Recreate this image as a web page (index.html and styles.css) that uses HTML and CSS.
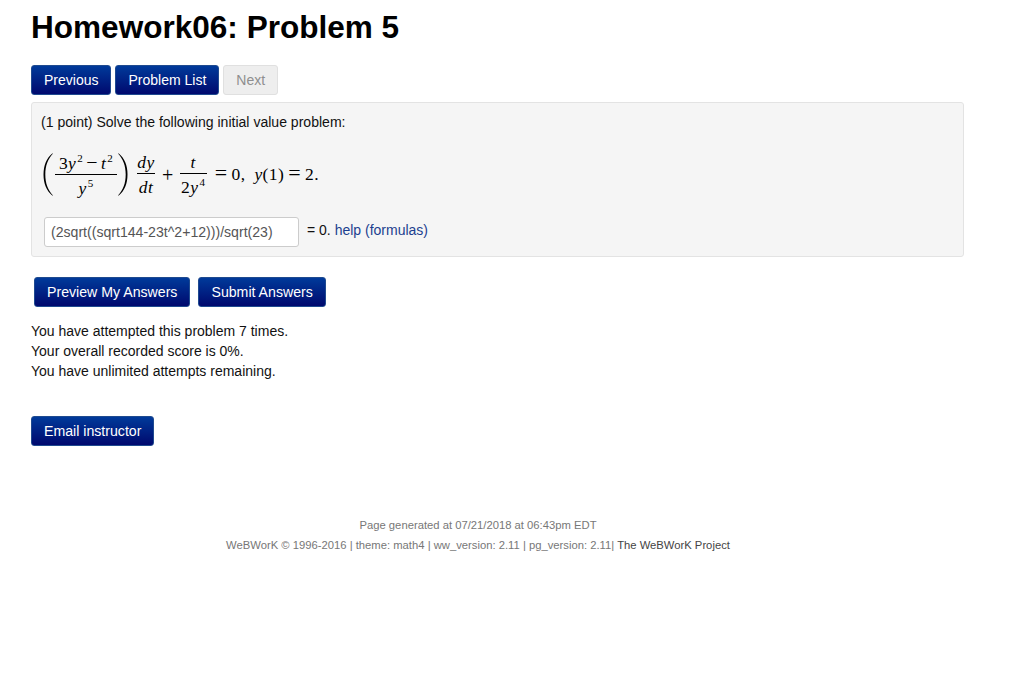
FILE: index.html
```html
<!DOCTYPE html>
<html lang="en">
<head>
<meta charset="utf-8">
<title>Homework06: Problem 5</title>
<link rel="stylesheet" href="styles.css">
</head>
<body>
<main class="page">
  <h1 class="title">Homework06: Problem 5</h1>
  <nav class="nav">
    <a class="btn">Previous</a>
    <a class="btn">Problem List</a>
    <a class="btn btn-off">Next</a>
  </nav>
  <section class="well">
    <p class="intro">(1 point) Solve the following initial value problem:</p>
    <div class="math">
      <svg class="paren" width="10" height="43" viewBox="0 0 10 43"><path d="M9.5 0.3C3.5 5 0.5 12.5 0.5 21.5S3.5 38 9.5 42.7L9.8 42.2C5 37 2.3 30.5 2.3 21.5S5 6 9.8 0.8Z"/></svg>
      <span class="frac f-main"><span class="num">3<i>y</i><sup>2</sup><span class="op">−</span><i>t</i><sup>2</sup></span><span class="den"><i>y</i><sup>5</sup></span></span>
      <svg class="paren" width="10" height="43" viewBox="0 0 10 43"><path d="M0.5 0.3C6.5 5 9.5 12.5 9.5 21.5S6.5 38 0.5 42.7L0.2 42.2C5 37 7.7 30.5 7.7 21.5S5 6 0.2 0.8Z"/></svg>
      <span class="frac f-dy"><span class="num"><i>dy</i></span><span class="den"><i>dt</i></span></span>
      <span class="plus">+</span>
      <span class="frac f-t"><span class="num"><i>t</i></span><span class="den">2<i>y</i><sup>4</sup></span></span>
      <span class="rest"><span class="eq">=</span>0,<span class="gap"></span><i>y</i>(1)<span class="eq">=</span>2.</span>
    </div>
    <div class="answer">
      <input class="field" type="text" value="(2sqrt((sqrt144-23t^2+12)))/sqrt(23)">
      <span class="after">= 0. <a class="link">help (formulas)</a></span>
    </div>
  </section>
  <div class="actions">
    <a class="btn btn-wide">Preview My Answers</a>
    <a class="btn btn-wide">Submit Answers</a>
  </div>
  <div class="score">
    <p>You have attempted this problem 7 times.</p>
    <p>Your overall recorded score is 0%.</p>
    <p>You have unlimited attempts remaining.</p>
  </div>
  <div class="email"><a class="btn btn-wide">Email instructor</a></div>
  <footer class="foot">
    <p>Page generated at 07/21/2018 at 06:43pm EDT</p>
    <p>WeBWorK © 1996-2016 | theme: math4 | ww_version: 2.11 | pg_version: 2.11| <span class="foot-link">The WeBWorK Project</span></p>
  </footer>
</main>
</body>
</html>
```
FILE: styles.css
```css
* { box-sizing: border-box; }
html, body { margin: 0; padding: 0; background: #fff; }
body { font-family: "Liberation Sans", Arial, sans-serif; font-size: 14px; line-height: 20px; color: #111; }
.page { width: 933px; margin-left: 31px; height: 683px; overflow: hidden; }
.title { margin: 0; padding-top: 7px; height: 65px; font-size: 31.55px; line-height: 40px; font-weight: 700; color: #000; }
.nav { display: flex; gap: 4px; height: 30px; }
.btn {
  display: inline-block; height: 30px; padding: 4px 12px; border: 1px solid #1f4a8f; border-radius: 3px;
  background: linear-gradient(to bottom, #003a9a, #00096e); color: #fff; font-size: 14px; line-height: 20px;
  white-space: nowrap;
}
.btn-wide { font-size: 14.15px; }
.btn-off { background: #eee; border-color: #e0e0e0; color: #8f8f8f; }
.well {
  margin-top: 7px; height: 155px; padding: 9px; background: #f5f5f5; border: 1px solid #e3e3e3; border-radius: 3px;
}
.intro { margin: 0; font-size: 14.05px; }
.math {
  display: flex; align-items: center; height: 47px; margin-top: 19px; margin-left: 2px;
  font-family: "Liberation Serif", "Times New Roman", serif; font-size: 17.5px; line-height: 20px; color: #000;
  letter-spacing: 0.4px;
}
.math i { font-style: italic; }
.math sup { font-size: 11px; line-height: 0; position: relative; top: -7px; vertical-align: baseline; margin-left: 1px; }
.paren { fill: #000; flex: none; }
.frac { display: flex; flex-direction: column; align-items: center; flex: none; }
.num { padding-bottom: 1px; border-bottom: 1px solid #000; align-self: stretch; text-align: center; white-space: nowrap; }
.den { padding-top: 3px; white-space: nowrap; }
.op { margin: 0 3px; font-size: 20px; }
.f-main { width: 62px; margin: 0 1px 0 2px; }
.f-dy { width: 18px; margin-left: 9px; }
.plus { margin: 0 6px 0 7px; font-size: 20px; }
.f-t { width: 27px; }
.rest { margin: -2px 0 0 8px; white-space: nowrap; }
.eq { font-size: 22px; }
.eq:first-child { margin-right: 4px; }
.eq:not(:first-child) { margin: 0 4px; }
.gap { display: inline-block; width: 9px; }
.answer { display: flex; align-items: center; margin-top: 19px; margin-left: 3px; height: 30px; }
.field {
  width: 255px; height: 30px; padding: 4px 6px; border: 1px solid #ccc; border-radius: 3px; background: #fff;
  font: 14.1px/20px "Liberation Sans", Arial, sans-serif; color: #555;
}
.after { margin-left: 8px; position: relative; top: -2px; }
.link { color: #1c3f8f; }
.actions { display: flex; gap: 8px; margin-top: 20px; margin-left: 3px; height: 30px; }
.score { margin-top: 14px; }
.score p { margin: 0; }
.email { margin-top: 35px; }
.foot { margin-top: 69px; width: 894px; text-align: center; font-size: 11.25px; color: #777; line-height: 20px; }
.foot p { margin: 0; }
.foot-link { color: #444; }
```
